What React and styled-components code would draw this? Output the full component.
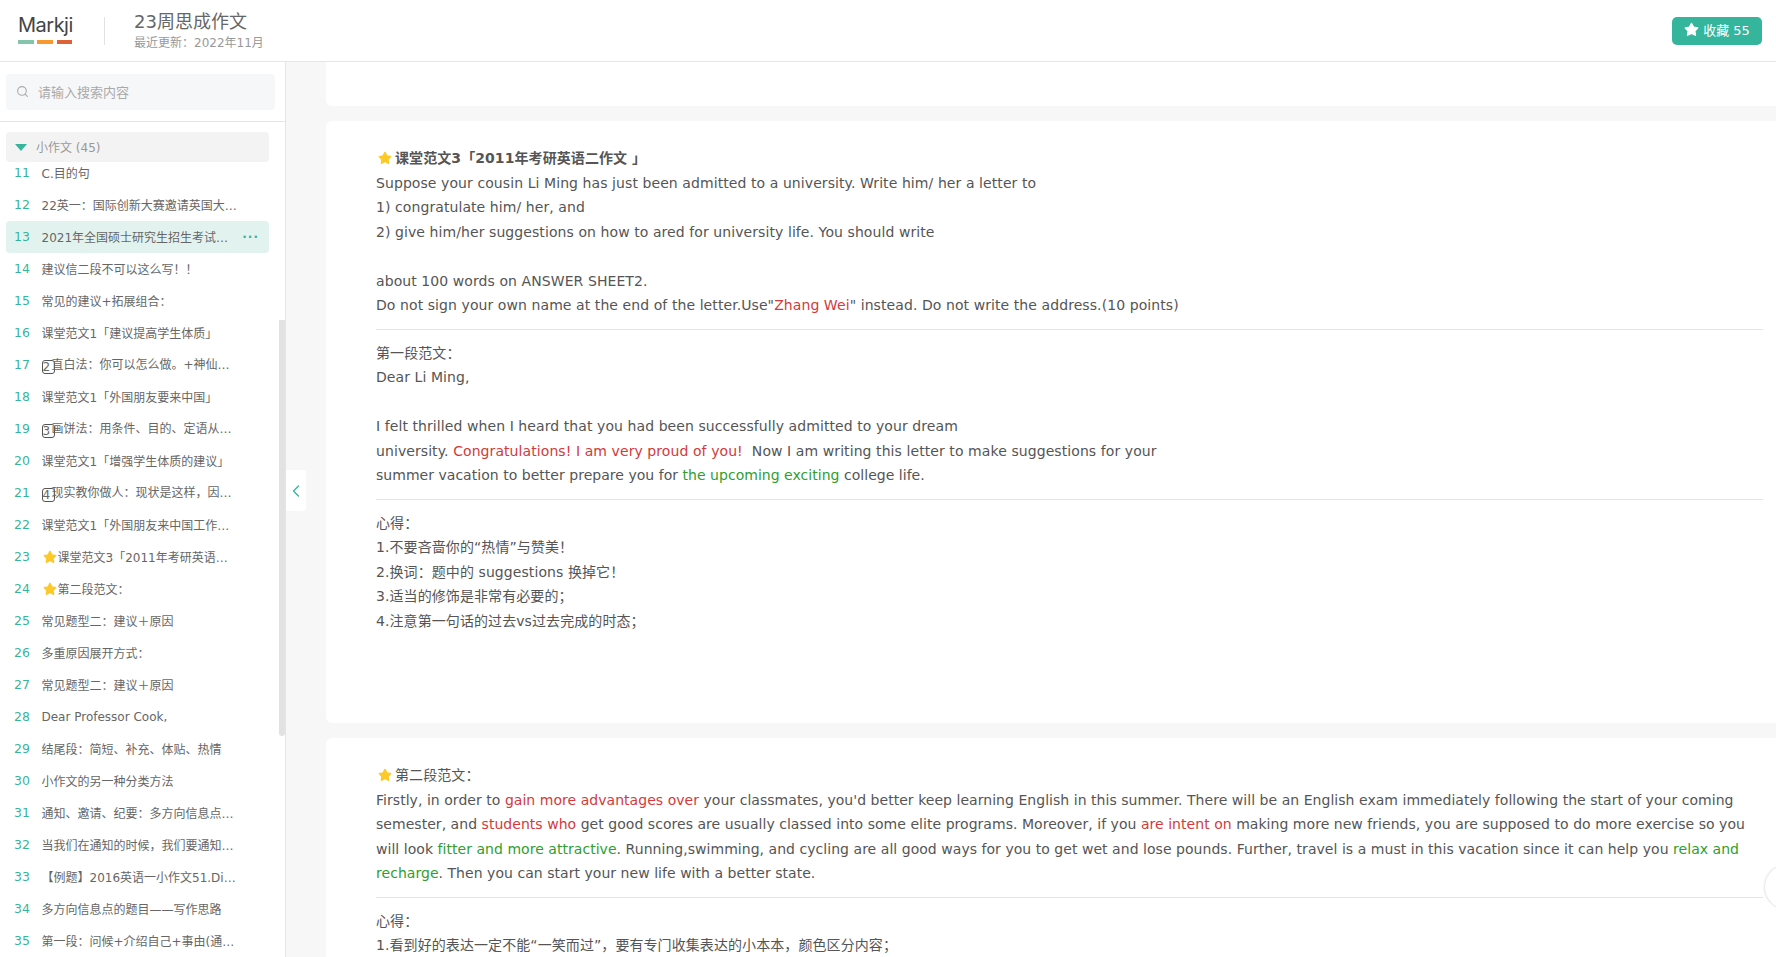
import React from 'react';
import styled, { createGlobalStyle } from 'styled-components';
import { ChevronLeft, Search } from 'lucide-react';

const GlobalStyle = createGlobalStyle`
  html, body { margin: 0; height: 100%; overflow: hidden; background: #fff; }
  body { font-family: "DejaVu Sans", "Noto Sans CJK SC", sans-serif; color: #555; }
`;

const Page = styled.div`
  position: relative;
  display: flex;
  flex-direction: column;
  width: 1776px;
  height: 957px;
  overflow: hidden;
`;

const Header = styled.header`
  display: flex;
  align-items: center;
  flex: none;
  height: 61px;
  padding: 0 14px 0 18px;
  border-bottom: 1px solid #e5e5e5;
`;

const Logo = styled.div`
  display: flex;
  flex-direction: column;
  align-self: flex-start;
  gap: 1.5px;
  width: 55px;
  margin-top: 12px;
`;

const LogoWord = styled.div`
  font: 20px/26px "Inter", "Noto Sans", sans-serif;
  letter-spacing: -0.5px;
  color: #444;
`;

const LogoBars = styled.div`
  display: flex;
  justify-content: space-between;
  width: 54px;
`;

const LogoBar = styled.span`
  width: 15.5px;
  height: 4px;
  background: ${p => p.$color};
`;

const Divider = styled.div`
  width: 1px;
  height: 28px;
  margin: 0 29px 0 31px;
  background: #e2e2e2;
`;

const TitleBlock = styled.div`
  display: flex;
  flex-direction: column;
  flex: 1;
`;

const Title = styled.div`
  font-size: 18px;
  line-height: 24px;
  color: #666;
`;

const Updated = styled.div`
  margin-top: 1px;
  font-size: 12px;
  line-height: 17px;
  color: #999;
`;

const CollectButton = styled.button`
  display: flex;
  align-items: center;
  justify-content: center;
  gap: 4px;
  width: 90px;
  height: 28px;
  padding: 0 0 2px;
  border: 0;
  border-radius: 5px;
  background: #36b59d;
  color: #fff;
  font: 13px "DejaVu Sans", "Noto Sans CJK SC", sans-serif;
`;

const Body = styled.div`
  display: flex;
  flex: 1;
  min-height: 0;
`;

const Sidebar = styled.aside`
  position: relative;
  display: flex;
  flex-direction: column;
  flex: none;
  width: 285px;
  border-right: 1px solid #e5e5e5;
  overflow: hidden;
`;

const SearchArea = styled.div`
  flex: none;
  padding: 12px 10px 11px 6px;
  border-bottom: 1px solid #e5e5e5;
`;

const SearchBox = styled.div`
  display: flex;
  align-items: center;
  gap: 9px;
  height: 34px;
  padding: 0 0 2px 10px;
  border-radius: 4px;
  background: #f6f7f8;
  color: #aaa;
  font-size: 13px;
`;

const Group = styled.div`
  position: relative;
  z-index: 1;
  display: flex;
  align-items: center;
  gap: 9px;
  flex: none;
  height: 28px;
  margin: 10px 16px 0 6px;
  padding: 0 0 2px 9px;
  border-radius: 4px;
  background: #f3f3f3;
  color: #999;
  font-size: 12px;
`;

const Triangle = styled.span`
  width: 0;
  height: 0;
  margin-top: 2px;
  border-style: solid;
  border-width: 7px 6px 0;
  border-color: #36b59d transparent transparent;
`;

const List = styled.div`
  margin: -5px 16px 0 6px;
`;

const Row = styled.div`
  display: flex;
  align-items: center;
  height: 31px;
  padding: 0 10px 1px 8px;
  border-radius: 4px;
  background: ${p => (p.$active ? '#e2f3ef' : 'transparent')};
  font-size: 12px;
  color: #666;
`;

const RowNumber = styled.span`
  flex: none;
  width: 27.5px;
  font-size: 12.5px;
  color: #36b59d;
`;

const RowText = styled.span`
  flex: none;
  width: ${p => (p.$active ? '188px' : '197px')};
  overflow: hidden;
  white-space: nowrap;
  text-overflow: ellipsis;
`;

const RowMore = styled.span`
  flex: none;
  margin-left: auto;
  letter-spacing: 1px;
  font-weight: 700;
  color: #36b59d;
`;

const Tofu = styled.span`
  display: inline-block;
  box-sizing: border-box;
  width: 13px;
  height: 14px;
  margin-right: -3px;
  border: 1px solid #555;
  border-radius: 3px;
  font-size: 12px;
  line-height: 12px;
  vertical-align: -2px;
`;

const Scrollbar = styled.div`
  position: absolute;
  right: 0;
  top: 258px;
  width: 6px;
  height: 416px;
  border-radius: 0 0 3px 3px;
  background: #e2e2e2;
`;

const CollapseTab = styled.div`
  position: absolute;
  left: 286px;
  top: 470px;
  display: flex;
  align-items: center;
  justify-content: center;
  width: 20px;
  height: 41px;
  border-radius: 0 3px 3px 0;
  background: #fff;
  color: #36b59d;
`;

const Main = styled.main`
  display: flex;
  flex: 1;
  flex-direction: column;
  gap: 15px;
  min-width: 0;
  padding-left: 40px;
  background: #f7f7f7;
  overflow: hidden;
`;

const Card = styled.section`
  flex: none;
  height: ${p => p.$height || 'auto'};
  box-sizing: border-box;
  padding: ${p => (p.$empty ? '0' : '25px 13px 90px 50px')};
  border-radius: ${p => (p.$empty ? '0 0 0 6px' : '6px 0 0 6px')};
  background: #fff;
  font-size: 14px;
  line-height: 24.5px;
  color: #555;
`;

const Line = styled.div`
  height: 24.5px;
  white-space: pre;
  letter-spacing: ${p => (p.$tight ? '0.03px' : '0.08px')};
`;

const Paragraph = styled.div`
  letter-spacing: 0.04px;
`;

const Heading = styled.span`
  font-weight: 700;
`;

const Rule = styled.hr`
  height: 1px;
  margin: 11px 0;
  border: 0;
  background: #e5e5e5;
`;

const Red = styled.span`
  color: #d4393b;
`;

const Green = styled.span`
  color: #2f9e2f;
`;

const Floater = styled.div`
  position: absolute;
  left: 1765px;
  top: 865px;
  width: 44px;
  height: 44px;
  box-sizing: border-box;
  border-radius: 50%;
  background: #fff;
  box-shadow: 0 0 3px rgba(0, 0, 0, 0.22);
`;

const StarSvg = styled.svg`
  margin: 0 ${p => p.$right || 0}px 0 ${p => p.$left || 0}px;
  vertical-align: -2px;
`;

const StarIcon = ({ size = 14, color = '#fcc928', left, right }) => (
  <StarSvg width={size} height={size} viewBox="0 0 24 24" $left={left} $right={right}>
    <path
      d="M12 2.500L15.200 8.600 21.800 9.600 17.100 14.400 18.200 21 12 17.900 5.800 21 6.900 14.400 2.200 9.600 8.800 8.600Z"
      fill={color}
      stroke={color}
      strokeWidth="2.500"
      strokeLinejoin="round"
    />
  </StarSvg>
);

const rows = [
  [11, 'C.目的句'],
  [12, '22英一：国际创新大赛邀请英国大学生参加比赛'],
  [13, '2021年全国硕士研究生招生考试英语二作文题目', 'active'],
  [14, '建议信二段不可以这么写！！'],
  [15, '常见的建议+拓展组合：'],
  [16, '课堂范文1「建议提高学生体质」'],
  [17, '直白法：你可以怎么做。+神仙句型表达方式', '2'],
  [18, '课堂范文1「外国朋友要来中国」'],
  [19, '画饼法：用条件、目的、定语从句来表达好处', '3'],
  [20, '课堂范文1「增强学生体质的建议」'],
  [21, '现实教你做人：现状是这样，因此我们应该', '4'],
  [22, '课堂范文1「外国朋友来中国工作的建议」'],
  [23, '课堂范文3「2011年考研英语二作文」', 'star'],
  [24, '第二段范文：', 'star'],
  [25, '常见题型二：建议＋原因'],
  [26, '多重原因展开方式：'],
  [27, '常见题型二：建议＋原因'],
  [28, 'Dear Professor Cook,'],
  [29, '结尾段：简短、补充、体贴、热情'],
  [30, '小作文的另一种分类方法'],
  [31, '通知、邀请、纪要：多方向信息点的写作'],
  [32, '当我们在通知的时候，我们要通知什么内容'],
  [33, '【例题】2016英语一小作文51.Directions'],
  [34, '多方向信息点的题目——写作思路'],
  [35, '第一段：问候+介绍自己+事由(通知邀请)'],
];

const SidebarRow = ({ num, text, mark }) => (
  <Row $active={mark === 'active'}>
    <RowNumber>{num}</RowNumber>
    <RowText $active={mark === 'active'}>
      {mark === 'star' && <StarIcon left={1} right={1} />}
      {['2', '3', '4'].includes(mark) && <Tofu>{mark}</Tofu>}
      {text}
    </RowText>
    {mark === 'active' && <RowMore>···</RowMore>}
  </Row>
);

export default function App() {
  return (
    <Page>
      <GlobalStyle />
      <Header>
        <Logo>
          <LogoWord>Markji</LogoWord>
          <LogoBars>
            <LogoBar $color="#85c4ac" />
            <LogoBar $color="#f7992e" />
            <LogoBar $color="#dd6238" />
          </LogoBars>
        </Logo>
        <Divider />
        <TitleBlock>
          <Title>23周思成作文</Title>
          <Updated>最近更新：2022年11月</Updated>
        </TitleBlock>
        <CollectButton>
          <StarIcon size={15} color="#fff" />
          收藏 55
        </CollectButton>
      </Header>
      <Body>
        <Sidebar>
          <SearchArea>
            <SearchBox>
              <Search size={13} strokeWidth={2} />
              请输入搜索内容
            </SearchBox>
          </SearchArea>
          <Group>
            <Triangle />
            小作文 (45)
          </Group>
          <List>
            {rows.map(([num, text, mark]) => (
              <SidebarRow key={num} num={num} text={text} mark={mark} />
            ))}
          </List>
          <Scrollbar />
        </Sidebar>
        <Main>
          <Card $empty $height="44px" />
          <Card>
            <Line><StarIcon left={2} right={3} /><Heading>课堂范文3「2011年考研英语二作文 」</Heading></Line>
            <Line>Suppose your cousin Li Ming has just been admitted to a university. Write him/ her a letter to</Line>
            <Line>1) congratulate him/ her, and</Line>
            <Line>2) give him/her suggestions on how to ared for university life. You should write</Line>
            <Line />
            <Line>about 100 words on ANSWER SHEET2.</Line>
            <Line>Do not sign your own name at the end of the letter.Use"<Red>Zhang Wei</Red>" instead. Do not write the address.(10 points)</Line>
            <Rule />
            <Line>第一段范文：</Line>
            <Line>Dear Li Ming,</Line>
            <Line />
            <Line>I felt thrilled when I heard that you had been successfully admitted to your dream</Line>
            <Line>university. <Red>Congratulations! I am very proud of you!</Red>  Now I am writing this letter to make suggestions for your</Line>
            <Line $tight>summer vacation to better prepare you for <Green>the upcoming exciting</Green> college life.</Line>
            <Rule />
            <Line>心得：</Line>
            <Line>1.不要吝啬你的“热情”与赞美！</Line>
            <Line>2.换词：题中的 suggestions 换掉它！</Line>
            <Line>3.适当的修饰是非常有必要的；</Line>
            <Line>4.注意第一句话的过去vs过去完成的时态；</Line>
          </Card>
          <Card>
            <Line><StarIcon left={2} right={3} />第二段范文：</Line>
            <Paragraph>
              Firstly, in order to <Red>gain more advantages over</Red> your classmates, you'd better keep learning English in this summer. There will be an English exam immediately following the start of your coming semester, and <Red>students who</Red> get good scores are usually classed into some elite programs. Moreover, if you <Red>are intent on</Red> making more new friends, you are supposed to do more exercise so you will look <Green>fitter and more attractive</Green>. Running,swimming, and cycling are all good ways for you to get wet and lose pounds. Further, travel is a must in this vacation since it can help you <Green>relax and recharge</Green>. Then you can start your new life with a better state.
            </Paragraph>
            <Rule />
            <Line>心得：</Line>
            <Line>1.看到好的表达一定不能“一笑而过”，要有专门收集表达的小本本，颜色区分内容；</Line>
          </Card>
        </Main>
      </Body>
      <CollapseTab>
        <ChevronLeft size={28} strokeWidth={1.6} />
      </CollapseTab>
      <Floater />
    </Page>
  );
}
